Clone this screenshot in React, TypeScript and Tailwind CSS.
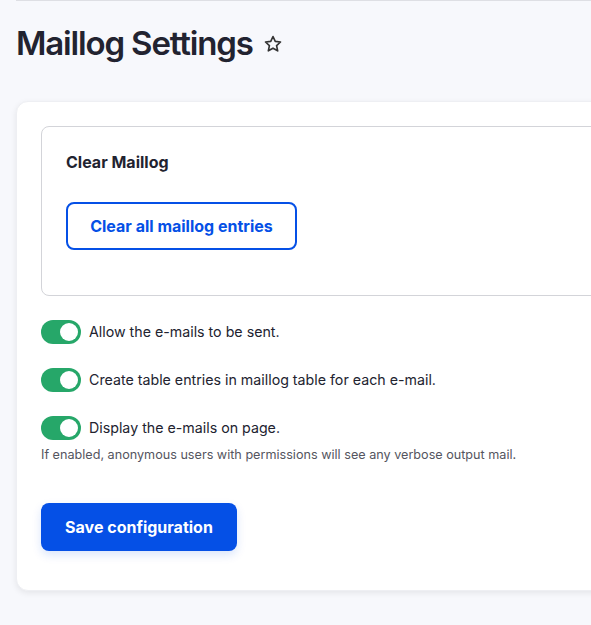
import React from 'react';

const Toggle: React.FC = () => (
  <span className="relative inline-flex h-6 w-10 shrink-0 items-center rounded-full bg-[#26a769]">
    <span className="absolute right-[3px] h-[18px] w-[18px] rounded-full bg-white" />
  </span>
);

const options = [
  'Allow the e-mails to be sent.',
  'Create table entries in maillog table for each e-mail.',
  'Display the e-mails on page.',
];

export default function App() {
  return (
    <div className="min-h-[625px] overflow-hidden bg-[#f7f8fc] pl-4 font-['Inter',sans-serif] text-[#222330]">
      <div className="h-px bg-[#dedfe4]" />
      <div className="flex items-center gap-[10px] pt-[22px] pb-[38px]">
        <h1 className="text-[33px] font-semibold leading-[40px] tracking-[-0.035em]">Maillog Settings</h1>
        <svg width="20" height="20" viewBox="0 0 24 24" fill="none" stroke="#333" strokeWidth="2" strokeLinejoin="round" className="mt-[2px]">
          <path d="M12 3l2.7 5.9 6.3.7-4.7 4.3 1.3 6.3L12 17l-5.6 3.2 1.3-6.3L3 9.6l6.3-.7z" />
        </svg>
      </div>

      <div className="w-[620px] rounded-xl border border-[#eeeff3] bg-white pt-6 pb-[39px] pl-6 shadow-[0_2px_6px_rgba(0,0,0,0.08)]">
        <div className="rounded-lg border border-[#d3d4d9] pl-6 pt-[23px] pb-[45px]">
          <div className="text-[16px] font-bold leading-6">Clear Maillog</div>
          <button className="mt-[28px] h-12 w-[231px] rounded-lg border-2 border-[#0550e6] text-[16px] font-bold text-[#0550e6]">
            Clear all maillog entries
          </button>
        </div>

        <div className="mt-6 flex flex-col gap-6">
          {options.map((o) => (
            <div key={o} className="flex items-center gap-2">
              <Toggle />
              <span className="text-[14.22px] leading-6">{o}</span>
            </div>
          ))}
        </div>
        <div className="mt-[6px] text-[12.64px] leading-[18px] text-[#545560]">
          If enabled, anonymous users with permissions will see any verbose output mail.
        </div>

        <button className="mt-[39px] h-12 w-[196px] rounded-lg bg-[#0550e6] text-[16px] font-bold text-white shadow-[0_4px_10px_rgba(5,80,230,0.15)]">
          Save configuration
        </button>
      </div>
    </div>
  );
}
